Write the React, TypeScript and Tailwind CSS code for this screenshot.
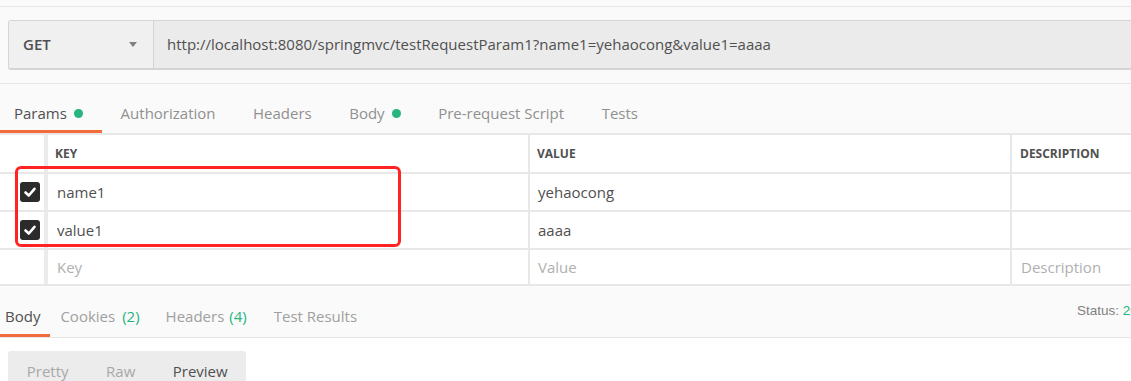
import React from "react";

const Dot = () => <span className="ml-[7px] inline-block w-[9px] h-[9px] rounded-full bg-[#26b47f]" />;

const Check = () => (
  <div className="w-[20px] h-[20px] rounded-[3px] bg-[#2b2b2b] flex items-center justify-center">
    <svg width="14" height="14" viewBox="0 0 14 14">
      <polyline points="2.5,7.5 5.8,10.5 11.5,3.8" fill="none" stroke="#ffffff" strokeWidth="2.6" strokeLinecap="round" strokeLinejoin="round" />
    </svg>
  </div>
);

const reqTabs: { label: string; dot?: boolean; active?: boolean }[] = [
  { label: "Params", dot: true, active: true },
  { label: "Authorization" },
  { label: "Headers" },
  { label: "Body", dot: true },
  { label: "Pre-request Script" },
  { label: "Tests" },
];

const rows = [
  { key: "name1", value: "yehaocong" },
  { key: "value1", value: "aaaa" },
];

export default function App() {
  return (
    <div className="relative w-[1131px] h-[381px] overflow-hidden bg-[#fafafa] flex flex-col font-['Open_Sans',sans-serif] text-[#505050]">
      <div className="h-[7px] shrink-0 border-b border-[#e6e6e6]" />

      {/* URL bar */}
      <div className="shrink-0 pt-[13px] pb-[13px] pl-[8px] border-b border-[#e6e6e6]">
        <div className="flex h-[50px] w-[1140px] border border-b-2 border-[#d4d4d4] rounded-[3px] overflow-hidden">
          <div className="w-[145px] shrink-0 bg-[#f0f0f0] border-r border-[#d4d4d4] flex items-center justify-between pl-[14px] pr-[16px]">
            <span className="text-[15px] font-semibold text-[#505050]">GET</span>
            <span className="w-0 h-0 border-l-[4px] border-r-[4px] border-t-[5px] border-l-transparent border-r-transparent border-t-[#808080]" />
          </div>
          <div className="flex-1 bg-[#ebebeb] flex items-center pl-[13px] text-[15px] text-[#505050] whitespace-nowrap">
            http://localhost:8080/springmvc/testRequestParam1?name1=yehaocong&amp;value1=aaaa
          </div>
        </div>
      </div>

      {/* Request tabs */}
      <div className="shrink-0 flex h-[51px] border-b-2 border-[#e8e8e8]">
        {reqTabs.map((t, i) => (
          <div
            key={t.label}
            className={
              "h-full flex items-end pb-[7px] border-b-[3px] " +
              (i === 0 ? "pl-[14px] pr-[19px] " : "px-[18.75px] ") +
              (t.active ? "border-[#f26b3a] text-[#505050]" : "border-transparent text-[#909090]")
            }
          >
            <span className="flex items-center text-[15px] leading-[20px] whitespace-nowrap">
              {t.label}
              {t.dot && <Dot />}
            </span>
          </div>
        ))}
      </div>

      {/* Params table */}
      <div className="shrink-0 bg-white">
        <div className="flex h-[39px] border-b-2 border-[#e8e8e8]">
          <div className="w-[48px] shrink-0 border-r-4 border-[#ebebeb]" />
          <div className="w-[482px] shrink-0 border-r-2 border-[#e8e8e8] pl-[7px] flex items-center text-[12px] font-bold text-[#505050]">KEY</div>
          <div className="w-[482px] shrink-0 border-r-2 border-[#e8e8e8] pl-[7px] flex items-center text-[12px] font-bold text-[#505050]">VALUE</div>
          <div className="flex-1 pl-[8px] flex items-center text-[12px] font-bold text-[#505050] whitespace-nowrap">DESCRIPTION</div>
        </div>
        {rows.map((r) => (
          <div key={r.key} className="flex h-[38px] border-b-2 border-[#e8e8e8]">
            <div className="w-[48px] shrink-0 border-r-4 border-[#ebebeb] pl-[20px] flex items-center">
              <Check />
            </div>
            <div className="w-[482px] shrink-0 border-r-2 border-[#e8e8e8] pl-[9px] flex items-center text-[15px] text-[#505050]">{r.key}</div>
            <div className="w-[482px] shrink-0 border-r-2 border-[#e8e8e8] pl-[8px] flex items-center text-[15px] text-[#505050]">{r.value}</div>
            <div className="flex-1" />
          </div>
        ))}
        <div className="flex h-[36px] border-b-2 border-[#e8e8e8]">
          <div className="w-[48px] shrink-0 border-r-4 border-[#ebebeb]" />
          <div className="w-[482px] shrink-0 border-r-2 border-[#e8e8e8] pl-[9px] flex items-center text-[15px] text-[#b0b0b0]">Key</div>
          <div className="w-[482px] shrink-0 border-r-2 border-[#e8e8e8] pl-[8px] flex items-center text-[15px] text-[#b0b0b0]">Value</div>
          <div className="flex-1 pl-[9px] flex items-center text-[15px] text-[#b0b0b0] whitespace-nowrap">Description</div>
        </div>
      </div>

      {/* Response tabs */}
      <div className="shrink-0 flex h-[52px] border-b border-[#e6e6e6] bg-[#fafafa]">
        <div className="w-[1077px] shrink-0 flex h-full">
          <div className="h-full flex items-end pb-[8px] pl-[5px] pr-[10px] border-b-[3px] border-[#f26b3a]">
            <span className="text-[15px] leading-[20px] text-[#505050]">Body</span>
          </div>
          <div className="h-full flex items-end pb-[8px] pl-[10px] pr-[13px] border-b-[3px] border-transparent">
            <span className="text-[15px] leading-[20px] text-[#a0a0a0] whitespace-nowrap">
              Cookies<span className="ml-[7px] text-[#26b47f]">(2)</span>
            </span>
          </div>
          <div className="h-full flex items-end pb-[8px] pl-[13px] pr-[13px] border-b-[3px] border-transparent">
            <span className="text-[15px] leading-[20px] text-[#a0a0a0] whitespace-nowrap">
              Headers<span className="ml-[5px] text-[#26b47f]">(4)</span>
            </span>
          </div>
          <div className="h-full flex items-end pb-[8px] pl-[14px] border-b-[3px] border-transparent">
            <span className="text-[15px] leading-[20px] text-[#a0a0a0] whitespace-nowrap">Test Results</span>
          </div>
        </div>
        <div className="shrink-0 self-center whitespace-nowrap font-['Liberation_Sans',Arial,sans-serif] text-[13.5px] text-[#808080]">
          Status: <span className="text-[#26b47f]">200 OK</span>
        </div>
      </div>

      {/* Response body */}
      <div className="flex-1 bg-white pl-[8px] pt-[13px]">
        <div className="inline-flex h-[40px] items-center bg-[#ececec] rounded-t-[3px]">
          <span className="px-[18.75px] text-[15px] text-[#a8a8a8]">Pretty</span>
          <span className="px-[18.75px] text-[15px] text-[#a8a8a8]">Raw</span>
          <span className="px-[18.75px] text-[15px] text-[#505050]">Preview</span>
        </div>
      </div>

      {/* Red annotation box */}
      <div className="absolute left-[15px] top-[166px] w-[386px] h-[81px] border-[3px] border-[#ff2424] rounded-[6px] pointer-events-none" />
    </div>
  );
}
